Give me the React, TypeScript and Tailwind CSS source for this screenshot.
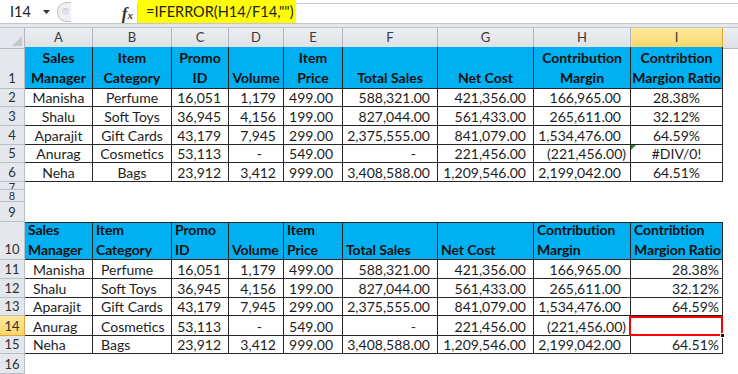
import React from "react";

const GRID =
  "grid grid-cols-[25px_68px_79px_57px_55px_59px_95px_96px_97px_92px_1fr]";

const COL_LETTERS = ["A", "B", "C", "D", "E", "F", "G", "H", "I"];

const HEADERS = [
  "Sales\nManager",
  "Item\nCategory",
  "Promo\nID",
  "Volume",
  "Item\nPrice",
  "Total Sales",
  "Net Cost",
  "Contribution\nMargin",
  "Contribtion\nMargion Ratio",
];

const DATA = [
  ["Manisha", "Perfume", "16,051", "1,179", "499.00", "588,321.00", "421,356.00", "166,965.00", "28.38%"],
  ["Shalu", "Soft Toys", "36,945", "4,156", "199.00", "827,044.00", "561,433.00", "265,611.00", "32.12%"],
  ["Aparajit", "Gift Cards", "43,179", "7,945", "299.00", "2,375,555.00", "841,079.00", "1,534,476.00", "64.59%"],
  ["Anurag", "Cosmetics", "53,113", "-", "549.00", "-", "221,456.00", "(221,456.00)", "#DIV/0!"],
  ["Neha", "Bags", "23,912", "3,412", "999.00", "3,408,588.00", "1,209,546.00", "2,199,042.00", "64.51%"],
];

const TOP_H = ["h-[18px]", "h-[19px]", "h-[19px]", "h-[18px]", "h-[19px]"];
const BOT_H = ["h-[19px]", "h-[19px]", "h-[18px]", "h-[20px]", "h-[18px]"];

const rowHead =
  "flex justify-center items-end bg-[#e4e8ed] border-r border-b border-[#b8bec6] text-[13px] leading-[17px] text-[#2f2f2f] overflow-hidden";
const cellBase =
  "flex items-end border-r border-b border-[#262626] text-[14px] leading-[17px] whitespace-nowrap overflow-hidden";

const PR: Record<number, string> = {
  2: "pr-[7px]",
  3: "pr-[7px]",
  4: "pr-[9px]",
  5: "pr-[7px]",
  6: "pr-[7px]",
  7: "pr-[9px]",
};

function numClass(ci: number, v: string) {
  if (v === "-") return "justify-end pr-[21px]";
  if (v.startsWith("(")) return "justify-end pr-[4px]";
  return "justify-end " + PR[ci];
}

function ColumnHeaderRow() {
  return (
    <div className={GRID + " h-[19px]"}>
      <div className="relative bg-[#e4e8ed] border-r border-b border-[#b0b7bf]">
        <svg className="absolute right-[2px] bottom-[2px]" width="10" height="10" viewBox="0 0 10 10">
          <polygon points="10,0 10,10 0,10" fill="#c3c8ce" />
        </svg>
      </div>
      {COL_LETTERS.map((c) =>
        c === "I" ? (
          <div
            key={c}
            className="flex items-center justify-center bg-gradient-to-b from-[#fde99c] to-[#f8d768] border-r border-b border-[#e2a43f] text-[13px] text-[#3a3a3a]"
          >
            {c}
          </div>
        ) : (
          <div
            key={c}
            className="flex items-center justify-center bg-gradient-to-b from-[#eceff2] to-[#dde1e6] border-r border-b border-[#b0b7bf] text-[13px] text-[#3a3a3a]"
          >
            {c}
          </div>
        )
      )}
      <div className="bg-gradient-to-b from-[#eceff2] to-[#dde1e6] border-b border-[#b0b7bf]" />
    </div>
  );
}

function TopTable() {
  return (
    <>
      <div className={GRID + " h-[42px]"}>
        <div className={rowHead + " pb-[1px]"}>1</div>
        {HEADERS.map((h, i) => (
          <div
            key={i}
            className="flex flex-col justify-end items-center text-center bg-[#00b0f0] border-r border-b border-[#262626] font-bold text-[14px] leading-[19.5px] text-[#111] whitespace-pre overflow-hidden pb-[1px]"
          >
            {h}
          </div>
        ))}
        <div />
      </div>
      {DATA.map((row, ri) => (
        <div key={ri} className={GRID + " " + TOP_H[ri]}>
          <div className={rowHead}>{ri + 2}</div>
          {row.map((v, ci) => {
            let a = "justify-center";
            if (ci >= 2 && ci <= 7) a = numClass(ci, v);
            const isErr = ci === 8 && v === "#DIV/0!";
            return (
              <div key={ci} className={cellBase + " " + a + (isErr ? " relative" : "")}>
                {isErr && (
                  <div className="absolute top-0 left-0 w-0 h-0 border-t-[5px] border-r-[5px] border-t-[#2a8a2a] border-r-transparent" />
                )}
                {v}
              </div>
            );
          })}
          <div />
        </div>
      ))}
    </>
  );
}

function BottomTable() {
  return (
    <>
      <div className={GRID + " h-[38px]"}>
        <div className={rowHead + " pb-[1px]"}>10</div>
        {HEADERS.map((h, i) => (
          <div
            key={i}
            className="flex flex-col justify-end items-start text-left bg-[#00b0f0] border-r border-b border-t border-[#262626] font-bold text-[14px] leading-[19.5px] text-[#111] whitespace-pre overflow-hidden pl-[3px] tracking-[-0.1px]"
          >
            {h}
          </div>
        ))}
        <div />
      </div>
      {DATA.map((row, ri) => {
        const selected = ri === 3;
        return (
          <div key={ri} className={GRID + " " + BOT_H[ri]}>
            {selected ? (
              <div className="flex justify-center items-end bg-gradient-to-b from-[#fde99c] to-[#f8d768] border-r border-b border-[#e2a43f] text-[13px] leading-[17px] text-[#2f2f2f]">
                {ri + 11}
              </div>
            ) : (
              <div className={rowHead}>{ri + 11}</div>
            )}
            {row.map((v, ci) => {
              let a = "justify-start pl-[8px]";
              if (ci >= 2 && ci <= 7) a = numClass(ci, v);
              if (ci === 8) a = "justify-end pr-[3px]";
              const val = ci === 8 && v === "#DIV/0!" ? "" : v;
              const isSel = ci === 8 && selected;
              return (
                <div key={ci} className={cellBase + " " + a + (isSel ? " relative overflow-visible" : "")}>
                  {val}
                  {isSel && (
                    <>
                      <div className="absolute -left-[2px] top-[0px] -right-[1px] -bottom-[1px] border-2 border-[#ff0000]" />
                      <div className="absolute -right-[3px] -bottom-[3px] w-[5px] h-[5px] bg-[#111] border border-white" />
                    </>
                  )}
                </div>
              );
            })}
            <div />
          </div>
        );
      })}
    </>
  );
}

export default function App() {
  return (
    <div className="w-[738px] h-[374px] overflow-hidden bg-white font-['Lato',sans-serif] text-[#1d1d1d] select-none">
      {/* Formula bar */}
      <div className="flex h-[23px] bg-white">
        <div className="w-[57px] flex items-center pl-[10px] text-[14.5px] text-[#222] relative">
          <span>I14</span>
          <svg className="absolute left-[43px] top-[10px]" width="7" height="4" viewBox="0 0 7 4">
            <polygon points="0,0 7,0 3.5,4" fill="#333" />
          </svg>
        </div>
        <div className="w-[14px] flex items-center">
          <svg width="14" height="20" viewBox="0 0 14 20">
            <path d="M14 0.5 H9 A8.5 9.5 0 0 0 9 19.5 H14" fill="#eef0f2" stroke="#b9bec5" />
            <ellipse cx="8.5" cy="9.5" rx="3.5" ry="3.5" fill="#dfe2e6" />
            <path d="M5.5 8.5 A3.5 3.5 0 0 1 11.5 8.5" stroke="#c4c8ce" fill="none" />
          </svg>
        </div>
        <div className="w-[67px] flex items-center justify-end pr-[4px] border-r border-[#c9cdd2] mt-[3px]">
          <span className="font-['Liberation_Serif',serif] italic font-bold text-[17px] text-[#333] leading-none">
            f<span className="text-[11px]">x</span>
          </span>
        </div>
        <div className="flex-1 flex">
          <div className="w-[158px] h-full bg-[#ffff00] flex items-center pl-[8px] text-[14.5px] text-[#222]">
            =IFERROR(H14/F14,"")
          </div>
          <div className="flex-1 mt-[3px] border-t border-[#c9cdd2]" />
        </div>
      </div>
      <div className="h-[5px] bg-[#e4e7eb] border-t border-b border-[#c2c7cd]" />

      <ColumnHeaderRow />
      <TopTable />

      {/* rows 7, 8, 9 */}
      <div className={GRID + " h-[8px]"}>
        <div className="flex justify-center items-start bg-[#e4e8ed] border-r border-b border-[#b8bec6] text-[11px] leading-[11px] text-[#2f2f2f] overflow-hidden">
          <span className="-mt-[1px]">7</span>
        </div>
        <div className="col-span-10" />
      </div>
      <div className={GRID + " h-[12px]"}>
        <div className="flex justify-center items-end bg-[#e4e8ed] border-r border-b border-[#b8bec6] text-[11px] leading-[11px] text-[#2f2f2f] overflow-hidden">
          <span>8</span>
        </div>
        <div className="col-span-10" />
      </div>
      <div className={GRID + " h-[20px]"}>
        <div className={rowHead}>9</div>
        <div className="col-span-10" />
      </div>

      <BottomTable />

      <div className={GRID + " h-[20px]"}>
        <div className={rowHead}>16</div>
        <div className="col-span-10" />
      </div>
    </div>
  );
}
